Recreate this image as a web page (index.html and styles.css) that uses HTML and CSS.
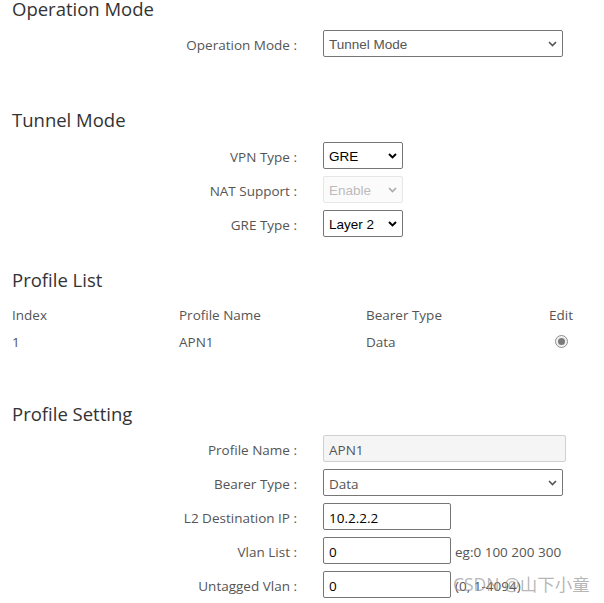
FILE: index.html
```html
<!DOCTYPE html>
<html lang="en">
<head>
<meta charset="utf-8">
<title>Tunnel Mode</title>
<link rel="stylesheet" href="styles.css">
</head>
<body>
<div class="page">
  <h2 class="sec-title first">Operation Mode</h2>
  <div class="form form-op">
    <div class="row">
      <label class="lbl">Operation Mode :</label>
      <span class="sel-wrap w240">
        <select class="sel sel-arial sel-gray"><option>Tunnel Mode</option></select>
        <svg class="chev" width="9" height="6" viewBox="0 0 9 6"><path d="M1 1 L4.5 4.5 L8 1" fill="none" stroke="#555" stroke-width="1.6"/></svg>
      </span>
    </div>
  </div>

  <h2 class="sec-title tunnel">Tunnel Mode</h2>
  <div class="form form-tunnel">
    <div class="row">
      <label class="lbl">VPN Type :</label>
      <span class="sel-wrap w80">
        <select class="sel sel-arial sel-black"><option>GRE</option></select>
        <svg class="chev" width="9" height="6" viewBox="0 0 9 6"><path d="M1 1 L4.5 4.5 L8 1" fill="none" stroke="#000" stroke-width="1.9"/></svg>
      </span>
    </div>
    <div class="row">
      <label class="lbl">NAT Support :</label>
      <span class="sel-wrap w80">
        <select class="sel sel-arial sel-disabled" disabled><option>Enable</option></select>
        <svg class="chev" width="9" height="6" viewBox="0 0 9 6"><path d="M1 1 L4.5 4.5 L8 1" fill="none" stroke="#aaa" stroke-width="1.6"/></svg>
      </span>
    </div>
    <div class="row">
      <label class="lbl">GRE Type :</label>
      <span class="sel-wrap w80">
        <select class="sel sel-arial sel-black"><option>Layer 2</option></select>
        <svg class="chev" width="9" height="6" viewBox="0 0 9 6"><path d="M1 1 L4.5 4.5 L8 1" fill="none" stroke="#000" stroke-width="1.9"/></svg>
      </span>
    </div>
  </div>

  <h2 class="sec-title plist">Profile List</h2>
  <div class="table">
    <div class="trow">
      <span>Index</span><span>Profile Name</span><span>Bearer Type</span><span class="c-edit">Edit</span>
    </div>
    <div class="trow">
      <span>1</span><span>APN1</span><span>Data</span><span class="c-edit"><span class="radio"><span class="dot"></span></span></span>
    </div>
  </div>

  <h2 class="sec-title psetting">Profile Setting</h2>
  <div class="form form-setting">
    <div class="row">
      <label class="lbl">Profile Name :</label>
      <input class="inp inp-readonly w243" value="APN1" readonly>
    </div>
    <div class="row">
      <label class="lbl">Bearer Type :</label>
      <span class="sel-wrap w240">
        <select class="sel sel-sans sel-gray"><option>Data</option></select>
        <svg class="chev" width="9" height="6" viewBox="0 0 9 6"><path d="M1 1 L4.5 4.5 L8 1" fill="none" stroke="#555" stroke-width="1.6"/></svg>
      </span>
    </div>
    <div class="row">
      <label class="lbl">L2 Destination IP :</label>
      <input class="inp w128" value="10.2.2.2">
    </div>
    <div class="row">
      <label class="lbl">Vlan List :</label>
      <input class="inp w128" value="0">
      <span class="hint">eg:0 100 200 300</span>
    </div>
    <div class="row">
      <label class="lbl">Untagged Vlan :</label>
      <input class="inp w128" value="0">
      <span class="hint">(0, 1-4094)</span>
    </div>
  </div>
  <div class="watermark">CSDN @山下小童</div>
</div>
</body>
</html>
```

FILE: styles.css
```css
html, body {
  margin: 0;
  padding: 0;
  background: #fff;
}
body {
  font-family: "Open Sans", "Noto Sans", sans-serif;
  color: #555;
  width: 604px;
  height: 603px;
  overflow: hidden;
}
.page {
  position: relative;
  padding: 0 0 0 12px;
  height: 603px;
}
.sec-title {
  margin: 0;
  font-weight: 400;
  font-size: 18.5px;
  line-height: 22px;
  height: 22px;
  color: #333;
  white-space: nowrap;
}
.sec-title.first { margin-top: -2px; }
.sec-title.tunnel { margin-top: 52px; }
.sec-title.plist { margin-top: 32px; }
.sec-title.psetting { margin-top: 48px; }

.form {
  display: flex;
  flex-direction: column;
  gap: 7px;
}
.form-op { margin-top: 10px; }
.form-tunnel { margin-top: 11px; }
.form-setting { margin-top: 10px; }

.row {
  display: flex;
  align-items: center;
  height: 27px;
}
.lbl {
  width: 285px;
  flex: none;
  text-align: right;
  font-size: 13.5px;
  color: #555;
  margin-right: 26px;
  padding-top: 2px;
  white-space: nowrap;
}

.sel-wrap {
  position: relative;
  display: inline-block;
  height: 27px;
  flex: none;
}
.w240 { width: 240px; }
.w80 { width: 80px; }
.w243 { width: 243px; }
.w128 { width: 128px; }

.sel {
  -webkit-appearance: none;
  appearance: none;
  box-sizing: border-box;
  width: 100%;
  height: 27px;
  margin: 0;
  border: 1px solid #767676;
  border-radius: 2px;
  background: #fff;
  padding: 1px 0 0 5px;
  outline: none;
}
.sel-arial {
  font-family: "Liberation Sans", Arial, sans-serif;
  font-size: 13.5px;
}
.sel-sans {
  font-family: "Open Sans", sans-serif;
  font-size: 13.5px;
  padding-top: 2px;
}
.sel-gray { color: #555; }
.sel-black { color: #000; }
.sel-disabled {
  color: #a0a0a0;
  background: #fafafa;
  border-color: #dcdcdc;
}
.chev {
  position: absolute;
  right: 6px;
  top: 11px;
  pointer-events: none;
}

.inp {
  box-sizing: border-box;
  height: 27px;
  margin: 0;
  border: 1px solid #767676;
  border-radius: 2px;
  padding: 2px 0 0 5px;
  font-family: "Open Sans", sans-serif;
  font-size: 13.5px;
  color: #000;
  background: #fff;
  outline: none;
  flex: none;
}
.inp-readonly {
  background: #f5f5f5;
  border-color: #d0d0d0;
  color: #555;
}
.hint {
  margin-left: 4px;
  padding-top: 2px;
  font-size: 13.5px;
  color: #555;
  white-space: nowrap;
}

.table {
  margin-top: 10px;
  display: flex;
  flex-direction: column;
}
.trow {
  display: grid;
  grid-template-columns: 167px 187px 177px 36px;
  height: 27px;
  align-items: center;
  font-size: 13.5px;
  color: #555;
}
.c-edit {
  text-align: center;
  display: flex;
  justify-content: center;
}
.radio {
  box-sizing: border-box;
  width: 13px;
  height: 13px;
  border-radius: 50%;
  border: 1px solid #8f8f8f;
  background: #f0f0f0;
  display: flex;
  align-items: center;
  justify-content: center;
}
.dot {
  width: 7px;
  height: 7px;
  border-radius: 50%;
  background: #7a7a7a;
}

.watermark {
  position: absolute;
  left: 453px;
  top: 575px;
  font-family: "Open Sans", "Noto Sans CJK SC", sans-serif;
  font-size: 17.5px;
  line-height: 22px;
  color: rgba(150, 150, 150, 0.7);
  white-space: nowrap;
  pointer-events: none;
}
```
